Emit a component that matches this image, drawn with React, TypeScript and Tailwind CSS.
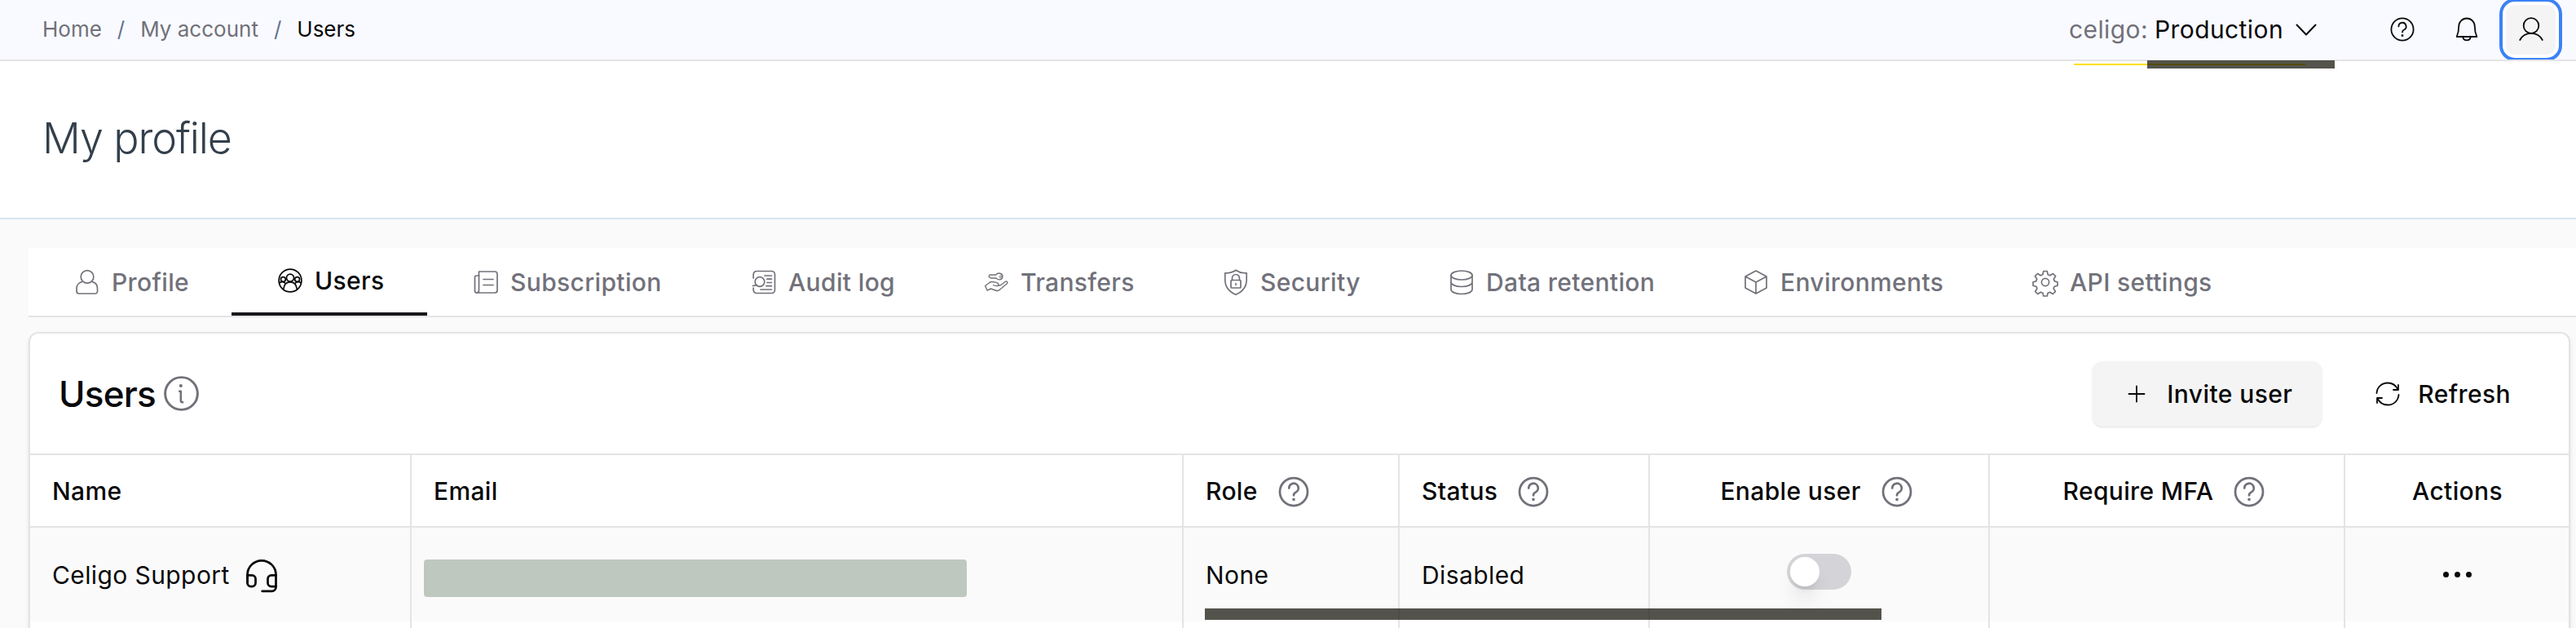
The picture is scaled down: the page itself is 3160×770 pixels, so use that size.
import type { ReactNode } from 'react';

function Icon({ children, className = 'size-8', stroke = 1.7 }: { children: ReactNode; className?: string; stroke?: number }) {
  return (
    <svg
      viewBox="0 0 32 32"
      className={`shrink-0 overflow-visible ${className}`}
      fill="none"
      stroke="currentColor"
      strokeWidth={stroke}
      strokeLinecap="round"
      strokeLinejoin="round"
    >
      {children}
    </svg>
  );
}

function HelpIcon({ className = 'size-8', stroke = 2 }: { className?: string; stroke?: number }) {
  return (
    <Icon className={className} stroke={stroke}>
      <circle cx="16" cy="16" r="13.600" />
      <path d="M11.400 12.400a4.600 4.600 0 1 1 6.600 4.100c-1.400.7-2 1.300-2 2.900" />
      <rect x="15.300" y="22.800" width="1.400" height="1.400" fill="currentColor" strokeWidth="1.200" />
    </Icon>
  );
}

const tabs: { label: string; width: string; icon: ReactNode; active?: boolean }[] = [
  {
    label: 'Profile',
    width: 'w-[249px]',
    icon: (
      <>
        <path d="M9.200 15.600C5.800 16.500 3 19.600 3 23.500V27a3 3 0 0 0 3 3h20a2.500 2.500 0 0 0 2.500-2.500v-4c0-4-2.700-7-6-7.900" />
        <circle cx="16" cy="9.400" r="7.800" />
      </>
    ),
  },
  {
    label: 'Users',
    width: 'w-[240px]',
    active: true,
    icon: (
      <>
        <circle cx="16" cy="16" r="13.900" />
        <circle cx="16" cy="12.600" r="4.500" />
        <circle cx="7.400" cy="14.500" r="2.900" />
        <circle cx="24.600" cy="14.500" r="2.900" />
        <path d="M7.800 26.500C8.300 21 11.500 17.800 16 17.800s7.700 3.200 8.200 8.700M3 18.800c2.400-1.800 5.600-1.400 7 .7M29 18.800c-2.400-1.800-5.600-1.400-7 .7" />
      </>
    ),
  },
  {
    label: 'Subscription',
    width: 'w-[341px]',
    icon: (
      <>
        <path d="M7.500 3H27a3 3 0 0 1 3 3v20a3 3 0 0 1-3 3H5a3 3 0 0 0 2.500-3V3Z" />
        <path d="M7.500 8H4.500A2 2 0 0 0 2.500 10v16.500A2.500 2.500 0 0 0 5 29M13 12.500h12M13 19.500h12" />
      </>
    ),
  },
  {
    label: 'Audit log',
    width: 'w-[285px]',
    icon: (
      <>
        <path d="M3.200 11V6.500a4 4 0 0 1 4-4H25.500a4 4 0 0 1 4 4V25.500a4 4 0 0 1-4 4H7.200a4 4 0 0 1-4-4V23" />
        <circle cx="11" cy="15.500" r="5.800" />
        <path d="M6.900 19.600 2.500 20.500M17 8h8.500M20 12.200h5.500M20 16.500h5.500M19 20.700h6.500M12 25h13.500" />
      </>
    ),
  },
  {
    label: 'Transfers',
    width: 'w-[294px]',
    icon: (
      <>
        <path d="M8 7h7.500c1.500-1.700 4-2.500 6-1.500 3.500 1.700 3 7-1 7.300-2.500.4-3.500-1.300-5-1.800H9.500L7 9.500Z" strokeWidth="1.400" />
        <circle cx="21.300" cy="9.300" r="1.200" strokeWidth="1" />
        <path d="m5 26-2.500-5.500 6-4.500c3-1.500 5.500 0 8 .7 2.200.3 3 1.800 2 3.300h2.500l6-4.500c2-1.200 3.800.5 2.300 2.300L20 25.500c-1.500 1.300-3 1.300-5 .5L9.500 24 5 26ZM12.500 19.500c1.800 1 3.500 1.200 6 .8" strokeWidth="1.400" />
      </>
    ),
  },
  {
    label: 'Security',
    width: 'w-[277px]',
    icon: (
      <>
        <path d="M16 1.200C12 4 7.500 5 2.800 4.800V13c0 8.500 4.500 14.500 13.200 18.300C24.700 27.500 29.200 21.500 29.200 13V4.800C24.500 5 20 4 16 1.200Z" />
        <rect x="10" y="13.500" width="12" height="9.500" rx="1" />
        <path d="M11.500 13.500V11a4.500 4.500 0 0 1 9 0v2.500M16 17.500v1.800" />
      </>
    ),
  },
  {
    label: 'Data retention',
    width: 'w-[361px]',
    icon: (
      <>
        <ellipse cx="16" cy="7.500" rx="13" ry="5.500" />
        <path d="M3 7.500V25c0 3 5.800 5.500 13 5.500S29 28 29 25V7.500M3 16c0 3 5.800 5.500 13 5.500S29 19 29 16" />
      </>
    ),
  },
  {
    label: 'Environments',
    width: 'w-[355px]',
    icon: <path d="M16 2 3 9v14l13 7 13-7V9L16 2ZM3 9l13 7 13-7M16 16v14" />,
  },
  {
    label: 'API settings',
    width: 'w-[340px]',
    icon: (
      <>
        <circle cx="16" cy="16" r="4.600" />
        <path d="M13.800 2.500h4.400l1 4.200 2.600 1.100 3.700-2.300 3.100 3.100-2.300 3.700 1.100 2.600 3.600.9v4.400l-3.800 1-1.100 2.500 2.300 3.700-3.100 3.100-3.700-2.300-2.500 1.100-.9 3.700h-4.400l-.9-3.700-2.500-1.100-3.700 2.300-3.100-3.100 2.300-3.700-1.100-2.500-3.800-1v-4.400l3.600-.9 1.100-2.600-2.300-3.700 3.100-3.100 3.700 2.300 2.600-1.100Z" />
      </>
    ),
  },
];

// Column widths include the 2px divider on the right.
const grid = 'grid grid-cols-[468px_947px_265px_307px_417px_436px_275px]';
const cell = 'flex items-center border-r-2 border-[#e4e4e7] pl-[27px] pt-0.5';

function HeaderCell({ label, help, center }: { label: string; help?: boolean; center?: boolean }) {
  return (
    <div className={`flex items-center border-r-2 border-[#e4e4e7] pt-0.5 font-medium last:border-r-0 ${center ? 'justify-center' : 'pl-[27px]'}`}>
      {label}
      {help && <HelpIcon className="mr-1.5 ml-6 size-10 text-[#71717a]" stroke={2.2} />}
    </div>
  );
}

function TopBar() {
  return (
    <header className="relative h-[75px] border-b-2 border-[#e4e4e7] bg-[#f9faff]">
      <div className="flex h-[73px] items-center justify-between overflow-hidden pl-[52px] pr-[25px]">
        <nav className="flex items-center gap-[19px] pb-0.5 text-[26px] text-[#71717a]">
          <span>Home</span>
          <span className="text-slate-500">/</span>
          <span>My account</span>
          <span className="text-slate-500">/</span>
          <span className="text-[#09090b]">Users</span>
        </nav>
        <div className="flex items-center pb-px text-[#09090b]">
          <button type="button" className="mr-[86px] flex items-center text-[30px] tracking-[0.4px]">
            <span className="mr-2 text-[#71717a]">celigo:</span>
            Production
            <Icon className="ml-3 size-8" stroke={2}>
              <path d="m4.500 10.500 11.500 12 11.500-12" />
            </Icon>
          </button>
          <HelpIcon className="mr-[47px] size-8" stroke={1.8} />
          <Icon className="mr-8 size-8" stroke={1.8}>
            <path d="M6.200 12.500a9.800 10 0 0 1 19.600 0c0 5.500 1 9 2.500 12.500H3.700c1.500-3.500 2.500-7 2.500-12.500ZM11.300 25.500c1 5.200 8.400 5.200 9.400 0" />
          </Icon>
          <button
            type="button"
            className="flex size-[61px] items-center justify-center rounded-[11px] bg-[#f4f4f5] shadow-[0_0_0_4px_#fff,0_0_0_8px_#3b82f6]"
          >
            <Icon stroke={1.8}>
              <circle cx="16" cy="11.500" r="9.300" />
              <path d="M2.200 29C5 23.500 9.500 20.800 16 20.800s11 2.700 13.800 8.200" />
            </Icon>
          </button>
        </div>
      </div>
      <div className="absolute top-[78px] left-[2544px] h-0.5 w-[284px] bg-[#ffe000]" />
      <div className="absolute top-[74px] left-[2634px] h-2.5 w-[230px] bg-[#0d0c00]/70" />
    </header>
  );
}

export default function App() {
  return (
    <div className="h-[770px] w-[3160px] overflow-hidden bg-[#fafafa] font-[Inter,sans-serif] text-[#09090b]">
      <TopBar />

      <div className="flex h-[194px] items-center border-b-2 border-[#d6e6ee] bg-white pb-0.5 pl-[52px]">
        <h1 className="text-[52px] font-light tracking-[-1.1px] text-[#333f4b]">My profile</h1>
      </div>

      <div className="mt-[35px] ml-[35px] flex h-[85px] border-b-2 border-[#e4e4e7] bg-white text-[30px] font-medium tracking-[0.35px]">
        {tabs.map((tab) => (
          <button
            key={tab.label}
            type="button"
            className={`flex items-center gap-3.5 pl-14 whitespace-nowrap ${tab.width} ${
              tab.active ? 'border-b-4 border-[#18181b]' : 'text-[#71717a]'
            }`}
          >
            <Icon>{tab.icon}</Icon>
            <span className="pt-0.5">{tab.label}</span>
          </button>
        ))}
      </div>

      <section className="mt-[18px] mr-[7px] ml-[35px] h-[380px] rounded-t-xl border-2 border-b-0 border-[#e4e4e7] bg-white shadow-md">
        <div className="flex h-[147px] items-center justify-between pr-[47px] pl-[35px]">
          <div className="flex items-center gap-2.5">
            <h2 className="text-[44px] font-medium tracking-[-0.8px]">Users</h2>
            <Icon className="size-[43px] text-[#71717a]" stroke={2.2}>
              <circle cx="16" cy="16" r="14.800" />
              <circle cx="15.500" cy="9" r="1" fill="currentColor" strokeWidth="1" />
              <path d="M14.300 14h1.200v8.500c0 1 .6 1.500 1.700 1.500" strokeWidth="1.900" />
            </Icon>
          </div>
          <div className="flex items-center text-[30px] font-medium tracking-[0.4px]">
            <button type="button" className="flex h-20 w-[281px] items-center gap-[21px] rounded-xl bg-[#f4f4f4] pl-[38px] shadow-sm">
              <Icon stroke={1.8}>
                <path d="M6.500 16h19M16 6.500v19" />
              </Icon>
              <span className="pt-0.5">Invite user</span>
            </button>
            <button type="button" className="ml-[65px] flex items-center gap-[21px] pr-6">
              <Icon stroke={1.8}>
                <path d="M2.500 15C3 7.500 9 2.500 16 2.500c5.500 0 10 3 12.500 8M29 5v6h-6M29.500 17c-.5 7.500-6.500 12.500-13.500 12.500-5.500 0-10-3-12.500-8M3 27v-6h6" />
              </Icon>
              <span className="pt-0.5">Refresh</span>
            </button>
          </div>
        </div>

        <div className={`${grid} h-[91px] border-y-2 border-[#e4e4e7] text-[30px] tracking-[0.35px]`}>
          <HeaderCell label="Name" />
          <HeaderCell label="Email" />
          <HeaderCell label="Role" help />
          <HeaderCell label="Status" help />
          <HeaderCell label="Enable user" help center />
          <HeaderCell label="Require MFA" help center />
          <HeaderCell label="Actions" center />
        </div>

        <div className={`${grid} relative h-[115px] bg-[#fafafa] text-[30px] tracking-[0.4px]`}>
          <div className={cell}>
            Celigo Support
            <Icon className="ml-[19px] size-10" stroke={2.2}>
              <path d="M2 22.500V15a14 14 0 0 1 28 0v12a4 4 0 0 1-4 4h-9.500" />
              <path d="M2 15.500h4.500A3.500 3.500 0 0 1 10 19v4a3.500 3.500 0 0 1-3.500 3.500h-1A3.500 3.500 0 0 1 2 23ZM30 15.500h-4.500A3.500 3.500 0 0 0 22 19v4a3.500 3.500 0 0 0 3.500 3.500H30" />
            </Icon>
          </div>
          <div className="flex items-center border-r-2 border-[#e4e4e7] pl-[15px]">
            <div className="mt-[9px] h-[46px] w-[666px] rounded bg-[#bfc8bf]" />
          </div>
          <div className={cell}>None</div>
          <div className={cell}>Disabled</div>
          <div className="flex items-center justify-center border-r-2 border-[#e4e4e7]">
            <div className="mb-[7px] flex h-11 w-[79px] items-center rounded-full bg-[#d4d4d8] p-1">
              <div className="size-9 rounded-full bg-white shadow-xl" />
            </div>
          </div>
          <div className={cell} />
          <div className="flex items-center justify-center gap-[7px]">
            <span className="size-[7px] rounded-full bg-[#09090b]" />
            <span className="size-[7px] rounded-full bg-[#09090b]" />
            <span className="size-[7px] rounded-full bg-[#09090b]" />
          </div>
          <div className="absolute top-[99px] left-[1441px] h-3.5 w-[830px] bg-[#0d0c00]/70" />
        </div>

        {/* top of the next row */}
        <div className={`${grid} h-6`}>
          <div className={cell} />
          <div className={cell} />
          <div className={cell} />
          <div className={cell} />
          <div className={cell} />
          <div className={cell} />
        </div>
      </section>
    </div>
  );
}
